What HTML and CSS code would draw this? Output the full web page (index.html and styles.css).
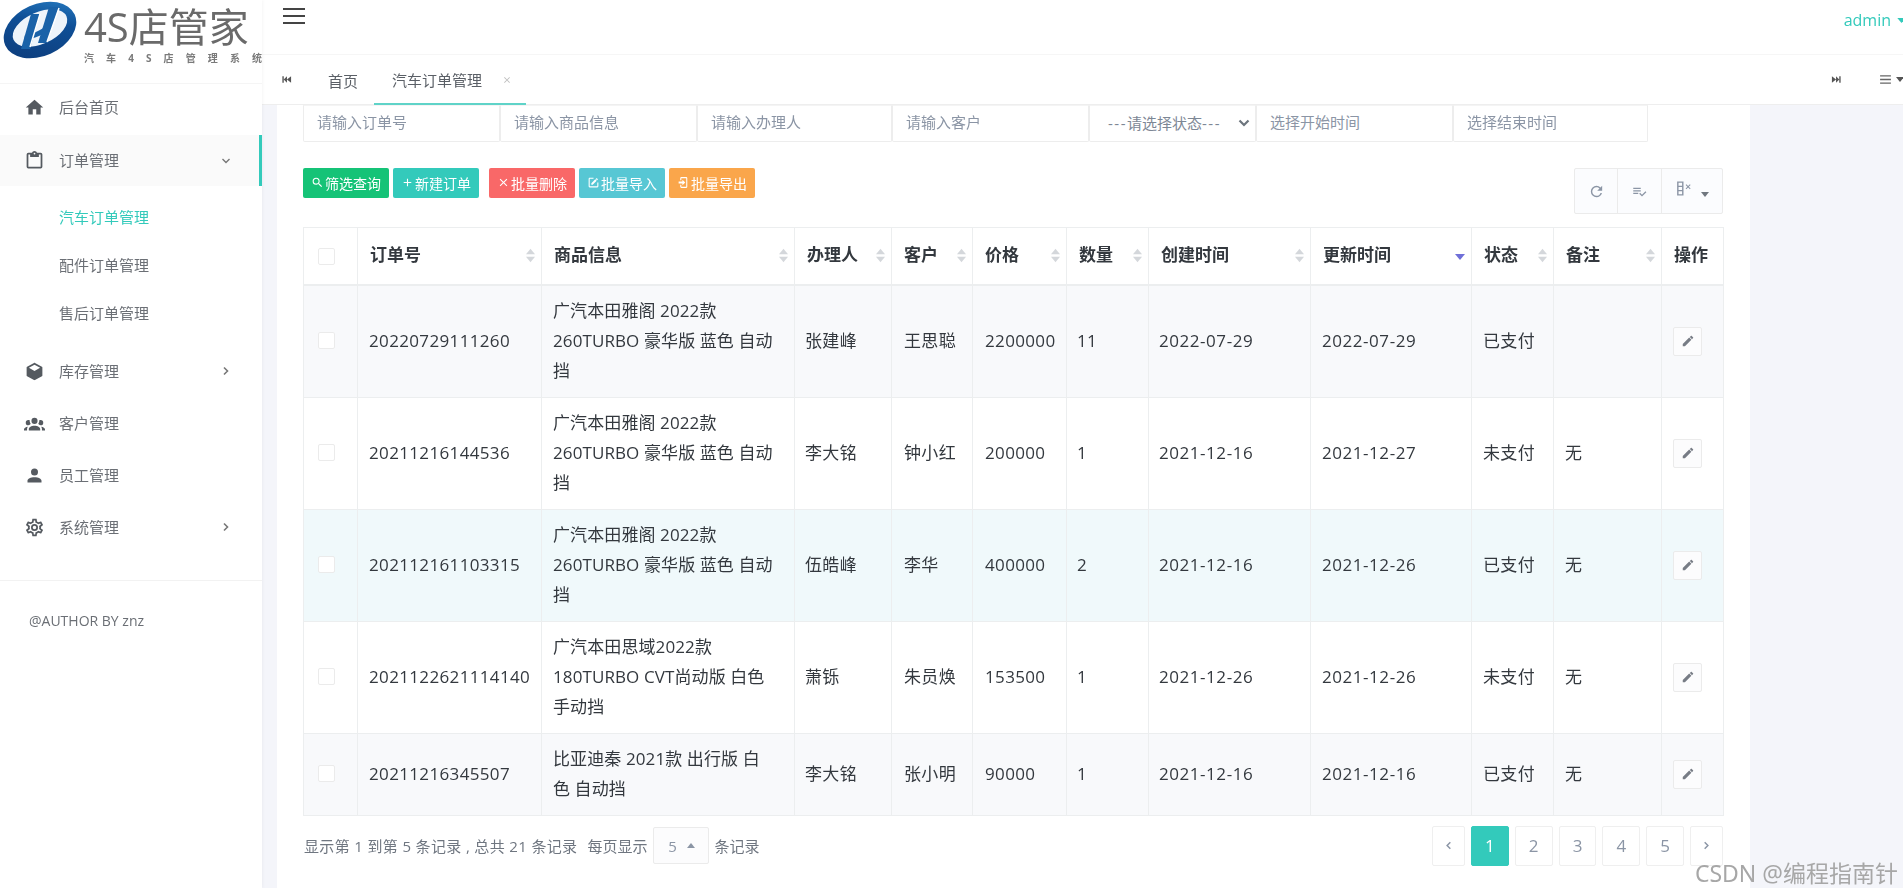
FILE: index.html
```html
<!DOCTYPE html>
<html lang="zh-CN">
<head>
<meta charset="utf-8">
<title>汽车订单管理</title>
<link rel="stylesheet" href="styles.css">
</head>
<body>
<svg class="defs" aria-hidden="true">
  <symbol id="i-home" viewBox="0 0 24 24"><path d="M10 20v-6h4v6h5v-8h3L12 3 2 12h3v8z"/></symbol>
  <symbol id="i-clip" viewBox="0 0 24 24"><path d="M19 3h-4.18C14.4 1.84 13.3 1 12 1s-2.4.84-2.82 2H5a2 2 0 0 0-2 2v14a2 2 0 0 0 2 2h14a2 2 0 0 0 2-2V5a2 2 0 0 0-2-2zm-7 0a1 1 0 1 1 0 2 1 1 0 0 1 0-2zm7 16H5V5h2v3h10V5h2z"/></symbol>
  <symbol id="i-cube" viewBox="0 0 24 24"><path d="M21 16.5c0 .38-.21.71-.53.88l-7.9 4.44c-.16.12-.36.18-.57.18s-.41-.06-.57-.18l-7.9-4.44A.991.991 0 0 1 3 16.5v-9c0-.38.21-.71.53-.88l7.9-4.44c.16-.12.36-.18.57-.18s.41.06.57.18l7.9 4.44c.32.17.53.5.53.88zM12 4.2 5.6 7.8 12 11.4l6.4-3.6z"/></symbol>
  <symbol id="i-group" viewBox="0 0 24 24"><path d="M12 5.5A3.5 3.5 0 0 1 15.5 9 3.5 3.5 0 0 1 12 12.5 3.5 3.5 0 0 1 8.5 9 3.5 3.5 0 0 1 12 5.5M5 8c.56 0 1.08.15 1.53.42-.15 1.43.27 2.85 1.13 3.96C7.16 13.34 6.16 14 5 14a3 3 0 0 1-3-3 3 3 0 0 1 3-3m14 0a3 3 0 0 1 3 3 3 3 0 0 1-3 3c-1.16 0-2.16-.66-2.66-1.62a5.536 5.536 0 0 0 1.13-3.96c.45-.27.97-.42 1.53-.42M5.5 18.25c0-2.07 2.91-3.75 6.5-3.75s6.5 1.68 6.5 3.75V20h-13v-1.75M0 20v-1.5c0-1.39 1.89-2.56 4.45-2.9-.59.68-.95 1.62-.95 2.65V20H0m24 0h-3.5v-1.75c0-1.03-.36-1.97-.95-2.65 2.56.34 4.45 1.51 4.45 2.9V20z"/></symbol>
  <symbol id="i-user" viewBox="0 0 24 24"><path d="M12 4a4 4 0 0 1 4 4 4 4 0 0 1-4 4 4 4 0 0 1-4-4 4 4 0 0 1 4-4m0 10c4.42 0 8 1.79 8 4v2H4v-2c0-2.21 3.58-4 8-4z"/></symbol>
  <symbol id="i-cog" viewBox="0 0 24 24"><path d="M12 8a4 4 0 0 1 4 4 4 4 0 0 1-4 4 4 4 0 0 1-4-4 4 4 0 0 1 4-4m0 2a2 2 0 0 0-2 2 2 2 0 0 0 2 2 2 2 0 0 0 2-2 2 2 0 0 0-2-2m-2 12c-.25 0-.46-.18-.5-.42l-.37-2.65c-.63-.25-1.17-.59-1.69-.99l-2.49 1.01c-.22.08-.49 0-.61-.22l-2-3.46a.493.493 0 0 1 .12-.64l2.11-1.66L4.5 12l.07-1-2.11-1.63a.493.493 0 0 1-.12-.64l2-3.46c.12-.22.39-.31.61-.22l2.49 1c.52-.39 1.06-.73 1.69-.98l.37-2.65c.04-.24.25-.42.5-.42h4c.25 0 .46.18.5.42l.37 2.65c.63.25 1.17.59 1.69.98l2.49-1c.22-.09.49 0 .61.22l2 3.46c.13.22.07.49-.12.64L19.43 11l.07 1-.07 1 2.11 1.63c.19.15.25.42.12.64l-2 3.46c-.12.22-.39.31-.61.22l-2.49-1c-.52.39-1.06.73-1.69.98l-.37 2.65c-.04.24-.25.42-.5.42h-4m1.25-18-.37 2.61c-1.2.25-2.26.89-3.03 1.78L5.44 7.35l-.75 1.3L6.8 10.2a5.55 5.55 0 0 0 0 3.6l-2.12 1.56.75 1.3 2.43-1.04c.77.88 1.82 1.52 3.01 1.76l.37 2.62h1.52l.37-2.61c1.19-.25 2.24-.89 3.01-1.77l2.43 1.04.75-1.3-2.12-1.55c.4-1.17.4-2.44 0-3.61l2.11-1.55-.75-1.3-2.41 1.04a5.42 5.42 0 0 0-3.03-1.77L12.75 4h-1.5z"/></symbol>
  <symbol id="i-pencil" viewBox="0 0 24 24"><path d="M20.71 7.04c.39-.39.39-1.04 0-1.41l-2.34-2.34c-.37-.39-1.02-.39-1.41 0l-1.84 1.83 3.75 3.75M3 17.25V21h3.75L17.81 9.93l-3.75-3.75L3 17.25z"/></symbol>
  <symbol id="i-search" viewBox="0 0 24 24"><path d="M9.5 3A6.5 6.5 0 0 1 16 9.5c0 1.61-.59 3.09-1.56 4.23l.27.27h.79l5 5-1.5 1.5-5-5v-.79l-.27-.27A6.516 6.516 0 0 1 9.5 16 6.5 6.5 0 0 1 3 9.5 6.5 6.5 0 0 1 9.5 3m0 2C7 5 5 7 5 9.5S7 14 9.5 14 14 12 14 9.5 12 5 9.5 5z"/></symbol>
  <symbol id="i-plus" viewBox="0 0 24 24"><path d="M19 13h-6v6h-2v-6H5v-2h6V5h2v6h6v2z"/></symbol>
  <symbol id="i-close" viewBox="0 0 24 24"><path d="M19 6.41 17.59 5 12 10.59 6.41 5 5 6.41 10.59 12 5 17.59 6.41 19 12 13.41 17.59 19 19 17.59 13.41 12 19 6.41z"/></symbol>
  <symbol id="i-edit" viewBox="0 0 24 24"><path d="M5 3c-1.11 0-2 .89-2 2v14a2 2 0 0 0 2 2h14a2 2 0 0 0 2-2v-7h-2v7H5V5h7V3H5m12.78 1a.69.69 0 0 0-.48.2l-1.22 1.21 2.5 2.5L19.8 6.7c.26-.26.26-.7 0-.95L18.25 4.2c-.13-.13-.3-.2-.47-.2m-2.41 2.12L8 13.5V16h2.5l7.37-7.38-2.5-2.5z"/></symbol>
  <symbol id="i-export" viewBox="0 0 24 24"><path d="M10 17.25V14H3v-4h7V6.75L15.25 12 10 17.25M8 2h9a2 2 0 0 1 2 2v16a2 2 0 0 1-2 2H8a2 2 0 0 1-2-2v-4h2v4h9V4H8v4H6V4a2 2 0 0 1 2-2z"/></symbol>
  <symbol id="i-refresh" viewBox="0 0 24 24"><path d="M17.65 6.35A7.958 7.958 0 0 0 12 4a8 8 0 0 0-8 8 8 8 0 0 0 8 8c3.73 0 6.84-2.55 7.73-6h-2.08A5.99 5.99 0 0 1 12 18a6 6 0 0 1-6-6 6 6 0 0 1 6-6c1.66 0 3.14.69 4.22 1.78L13 11h7V4l-2.35 2.35z"/></symbol>
  <symbol id="i-list" viewBox="0 0 24 24"><path d="M14 10H2v2h12v-2m0-4H2v2h12V6M2 16h8v-2H2v2m19.5-4.5L23 13l-6.99 7-4.51-4.5L13 14l3.01 3 5.49-5.5z"/></symbol>
  <symbol id="i-cols" viewBox="0 0 24 24"><path d="M3 2h9v20H3zm2 2v4h5V4zm0 6v4h5v-4zm0 6v4h5v-4zM15 7l1-1 2.500 2.500L21 6l1 1-2.500 2.500L22 12l-1 1-2.500-2.500L16 13l-1-1 2.500-2.500z"/></symbol>
  <symbol id="i-first" viewBox="0 0 24 24"><path d="M3 5h3v14H3zM13 5v14L6 12zM22 5v14l-9-7z"/></symbol>
  <symbol id="i-last" viewBox="0 0 24 24"><path d="M21 5h-3v14h3zM11 5v14l7-7zM2 5v14l9-7z"/></symbol>
  <symbol id="i-menu" viewBox="0 0 24 24"><path d="M2 4h20v2.600H2zM2 10.700h20v2.600H2zM2 17.400h20V20H2z"/></symbol>
  <symbol id="i-down" viewBox="0 0 12 12"><path d="M2.500 4 6 7.500 9.500 4" fill="none" stroke="currentColor" stroke-width="1.400"/></symbol>
  <symbol id="i-chev" viewBox="0 0 12 12"><path d="M1.500 3.500 6 8 10.500 3.500" fill="none" stroke="currentColor" stroke-width="2.200"/></symbol>
  <symbol id="i-right" viewBox="0 0 12 12"><path d="M4 2.500 7.500 6 4 9.500" fill="none" stroke="currentColor" stroke-width="1.600"/></symbol>
  <symbol id="i-left" viewBox="0 0 12 12"><path d="M8 2.500 4.500 6 8 9.500" fill="none" stroke="currentColor" stroke-width="1.600"/></symbol>
  <symbol id="i-caret" viewBox="0 0 10 6"><path d="M0 0h10L5 6z"/></symbol>
  <symbol id="i-up" viewBox="0 0 10 6"><path d="M0 6h10L5 0z"/></symbol>
</svg>

<div class="app">
  <aside class="sidebar">
    <div class="brand">
      <svg class="brand-mark" viewBox="0 0 78 62" aria-hidden="true">
        <defs>
          <linearGradient id="orb" x1="0" y1="1" x2="1" y2="0">
            <stop offset="0" stop-color="#0d3a78"/>
            <stop offset=".6" stop-color="#0f4f96"/>
            <stop offset="1" stop-color="#2a83c9"/>
          </linearGradient>
        </defs>
        <ellipse cx="37" cy="30" rx="38" ry="26" transform="rotate(-24 37 30)" fill="url(#orb)"/>
        <ellipse cx="37" cy="28" rx="29" ry="16" transform="rotate(-24 37 28)" fill="#eef4fa"/>
        <path d="M28 14h9L27 49h-9z" fill="#1a62a8"/>
        <path d="M46 7h10L44 43h-9z" fill="#1a62a8"/>
        <path d="M22 35C31 34 41 29 50 20v6C42 34 32 39 21 40z" fill="#1a62a8"/>
        <path d="M37 14 27 47M56 8 44 42" fill="none" stroke="#fff" stroke-width="1.500"/>
      </svg>
      <div class="brand-copy">
        <div class="brand-title">4S店管家</div>
        <div class="brand-sub"><span>汽</span><span>车</span><span>4</span><span>S</span><span>店</span><span>管</span><span>理</span><span>系</span><span>统</span></div>
      </div>
    </div>
    <nav class="nav">
      <a class="nav-item nav-first"><svg class="nav-icon"><use href="#i-home"/></svg><span>后台首页</span></a>
      <a class="nav-item nav-open"><svg class="nav-icon"><use href="#i-clip"/></svg><span>订单管理</span><svg class="nav-arrow"><use href="#i-down"/></svg></a>
      <div class="subnav">
        <a class="sub-item sub-active">汽车订单管理</a>
        <a class="sub-item">配件订单管理</a>
        <a class="sub-item">售后订单管理</a>
      </div>
      <a class="nav-item"><svg class="nav-icon"><use href="#i-cube"/></svg><span>库存管理</span><svg class="nav-arrow"><use href="#i-right"/></svg></a>
      <a class="nav-item"><svg class="nav-icon"><use href="#i-group"/></svg><span>客户管理</span></a>
      <a class="nav-item"><svg class="nav-icon"><use href="#i-user"/></svg><span>员工管理</span></a>
      <a class="nav-item"><svg class="nav-icon"><use href="#i-cog"/></svg><span>系统管理</span><svg class="nav-arrow"><use href="#i-right"/></svg></a>
    </nav>
    <div class="author">@AUTHOR BY znz</div>
  </aside>

  <div class="main">
    <header class="topbar">
      <div class="burger"><i></i><i></i><i></i></div>
      <div class="user">admin<svg class="user-caret"><use href="#i-caret"/></svg></div>
    </header>
    <div class="tabs">
      <svg class="tab-nav"><use href="#i-first"/></svg>
      <a class="tab">首页</a>
      <a class="tab tab-active">汽车订单管理<svg class="tab-close"><use href="#i-close"/></svg></a>
      <svg class="tab-nav tab-next"><use href="#i-last"/></svg>
      <svg class="tab-menu"><use href="#i-menu"/></svg>
      <svg class="tab-caret"><use href="#i-caret"/></svg>
    </div>
    <div class="body">
      <section class="card">
        <form class="filters">
          <input class="field" placeholder="请输入订单号">
          <input class="field" placeholder="请输入商品信息">
          <input class="field" placeholder="请输入办理人">
          <input class="field" placeholder="请输入客户">
          <div class="field field-select"><span><span class="dash">---</span>请选择状态<span class="dash">---</span></span><svg class="select-arrow"><use href="#i-chev"/></svg></div>
          <input class="field" placeholder="选择开始时间">
          <input class="field" placeholder="选择结束时间">
        </form>

        <div class="actions">
          <div class="btns">
            <a class="btn btn-green"><svg><use href="#i-search"/></svg>筛选查询</a>
            <a class="btn btn-teal"><svg><use href="#i-plus"/></svg>新建订单</a>
            <a class="btn btn-red"><svg><use href="#i-close"/></svg>批量删除</a>
            <a class="btn btn-cyan"><svg><use href="#i-edit"/></svg>批量导入</a>
            <a class="btn btn-orange"><svg><use href="#i-export"/></svg>批量导出</a>
          </div>
          <div class="tools">
            <a class="tool tool-a"><svg><use href="#i-refresh"/></svg></a>
            <a class="tool tool-b"><svg><use href="#i-list"/></svg></a>
            <a class="tool tool-c"><svg><use href="#i-cols"/></svg><svg class="tool-caret"><use href="#i-caret"/></svg></a>
          </div>
        </div>

        <table class="grid">
          <colgroup>
            <col class="c-check"><col class="c-no"><col class="c-goods"><col class="c-staff"><col class="c-cust"><col class="c-price"><col class="c-qty"><col class="c-date"><col class="c-date2"><col class="c-state"><col class="c-note"><col class="c-op">
          </colgroup>
          <thead>
            <tr>
              <th class="cell-check"><span class="check"></span></th>
              <th><div class="th-in">订单号<span class="sort"><svg><use href="#i-up"/></svg><svg><use href="#i-caret"/></svg></span></div></th>
              <th><div class="th-in">商品信息<span class="sort"><svg><use href="#i-up"/></svg><svg><use href="#i-caret"/></svg></span></div></th>
              <th><div class="th-in">办理人<span class="sort"><svg><use href="#i-up"/></svg><svg><use href="#i-caret"/></svg></span></div></th>
              <th><div class="th-in">客户<span class="sort"><svg><use href="#i-up"/></svg><svg><use href="#i-caret"/></svg></span></div></th>
              <th><div class="th-in">价格<span class="sort"><svg><use href="#i-up"/></svg><svg><use href="#i-caret"/></svg></span></div></th>
              <th><div class="th-in">数量<span class="sort"><svg><use href="#i-up"/></svg><svg><use href="#i-caret"/></svg></span></div></th>
              <th><div class="th-in">创建时间<span class="sort"><svg><use href="#i-up"/></svg><svg><use href="#i-caret"/></svg></span></div></th>
              <th><div class="th-in">更新时间<span class="sort sort-desc"><svg><use href="#i-caret"/></svg></span></div></th>
              <th><div class="th-in">状态<span class="sort"><svg><use href="#i-up"/></svg><svg><use href="#i-caret"/></svg></span></div></th>
              <th><div class="th-in">备注<span class="sort"><svg><use href="#i-up"/></svg><svg><use href="#i-caret"/></svg></span></div></th>
              <th><div class="th-in">操作</div></th>
            </tr>
          </thead>
          <tbody>
            <tr class="row-odd">
              <td class="cell-check"><span class="check"></span></td>
              <td>20220729111260</td>
              <td>广汽本田雅阁 2022款 260TURBO 豪华版 蓝色 自动挡</td>
              <td>张建峰</td><td>王思聪</td><td>2200000</td><td>11</td>
              <td>2022-07-29</td><td>2022-07-29</td><td>已支付</td><td></td>
              <td><a class="op"><svg><use href="#i-pencil"/></svg></a></td>
            </tr>
            <tr>
              <td class="cell-check"><span class="check"></span></td>
              <td>20211216144536</td>
              <td>广汽本田雅阁 2022款 260TURBO 豪华版 蓝色 自动挡</td>
              <td>李大铭</td><td>钟小红</td><td>200000</td><td>1</td>
              <td>2021-12-16</td><td>2021-12-27</td><td>未支付</td><td>无</td>
              <td><a class="op"><svg><use href="#i-pencil"/></svg></a></td>
            </tr>
            <tr class="row-hover">
              <td class="cell-check"><span class="check"></span></td>
              <td>202112161103315</td>
              <td>广汽本田雅阁 2022款 260TURBO 豪华版 蓝色 自动挡</td>
              <td>伍皓峰</td><td>李华</td><td>400000</td><td>2</td>
              <td>2021-12-16</td><td>2021-12-26</td><td>已支付</td><td>无</td>
              <td><a class="op"><svg><use href="#i-pencil"/></svg></a></td>
            </tr>
            <tr>
              <td class="cell-check"><span class="check"></span></td>
              <td>2021122621114140</td>
              <td>广汽本田思域2022款 180TURBO CVT尚动版 白色 手动挡</td>
              <td>萧铄</td><td>朱员焕</td><td>153500</td><td>1</td>
              <td>2021-12-26</td><td>2021-12-26</td><td>未支付</td><td>无</td>
              <td><a class="op"><svg><use href="#i-pencil"/></svg></a></td>
            </tr>
            <tr class="row-odd">
              <td class="cell-check"><span class="check"></span></td>
              <td>20211216345507</td>
              <td>比亚迪秦 2021款 出行版 白色 自动挡</td>
              <td>李大铭</td><td>张小明</td><td>90000</td><td>1</td>
              <td>2021-12-16</td><td>2021-12-16</td><td>已支付</td><td>无</td>
              <td><a class="op"><svg><use href="#i-pencil"/></svg></a></td>
            </tr>
          </tbody>
        </table>

        <div class="pager-row">
          <div class="pager-info">
            <span class="pager-text">显示第 1 到第 5 条记录 , 总共 21 条记录</span>
            <span class="pager-size">每页显示</span>
            <span class="size-box">5<svg><use href="#i-up"/></svg></span>
            <span>条记录</span>
          </div>
          <div class="pager">
            <a class="page page-nav"><svg><use href="#i-left"/></svg></a>
            <a class="page page-on">1</a>
            <a class="page">2</a>
            <a class="page">3</a>
            <a class="page">4</a>
            <a class="page">5</a>
            <a class="page page-nav"><svg><use href="#i-right"/></svg></a>
          </div>
        </div>
      </section>
    </div>
  </div>
  <div class="watermark">CSDN @编程指南针</div>
</div>
</body>
</html>
```

FILE: styles.css
```css
* { box-sizing: border-box; }
html, body { margin: 0; height: 100%; overflow: hidden; background: #fff; }
body { font-family: "Open Sans", "Noto Sans CJK SC", sans-serif; font-size: 15px; color: #4d5259; }
a { color: inherit; text-decoration: none; }
svg { fill: currentColor; display: block; }
.defs { position: absolute; width: 0; height: 0; }

.app { position: relative; display: flex; width: 1903px; height: 888px; overflow: hidden; filter: blur(0.55px); }

/* sidebar */
.sidebar { flex: 0 0 262px; width: 262px; background: #fff; color: #6b6f75; box-shadow: 1px 0 3px rgba(0,0,0,.04); z-index: 1; }
.brand { display: flex; height: 84px; border-bottom: 1px solid #f5f5f5; padding-left: 3px; overflow: hidden; }
.brand-mark { flex: 0 0 78px; width: 78px; height: 62px; }
.brand-copy { margin-left: 3px; white-space: nowrap; }
.brand-title { font-size: 40px; line-height: 40px; margin-top: 7px; color: #6a6a6a; font-weight: 400; }
.brand-sub { display: flex; justify-content: space-between; width: 178px; font-size: 10px; line-height: 12px; margin-top: 5px; color: #7a7a7a; font-weight: 700; }

.nav { padding-bottom: 27px; border-bottom: 1px solid #f2f2f2; }
.nav-item { display: flex; align-items: center; height: 52px; padding-left: 24px; }
.nav-item span { margin-top: -2px; }
.nav-first { height: 46px; margin-bottom: 5px; }
.nav-open { height: 51px; background: #fafafa; border-right: 3px solid #33cabb; }
.nav-icon { flex: 0 0 21px; width: 21px; height: 21px; margin-right: 14px; color: #555a60; }
.nav-arrow { width: 12px; height: 12px; margin-left: auto; margin-right: 30px; color: #777; }
.nav-open .nav-arrow { margin-right: 27px; }
.subnav { padding: 7px 0 8px; }
.sub-item { display: block; height: 48px; line-height: 48px; padding-left: 59px; }
.sub-active { color: #33cabb; }
.author { padding: 29px 0 0 29px; line-height: 22px; font-size: 14px; color: #6b6f75; }

/* main */
.main { flex: 1; display: flex; flex-direction: column; min-width: 0; }
.topbar { display: flex; justify-content: space-between; align-items: flex-start; height: 55px; flex: 0 0 55px; padding: 8px 0 0 21px; border-bottom: 1px solid #f6f6f6; }
.burger { display: flex; flex-direction: column; gap: 5px; width: 22px; }
.burger i { display: block; height: 2px; background: #444; }
.user { display: flex; align-items: center; color: #33cabb; font-size: 16px; line-height: 22px; margin-top: 1px; margin-right: -3px; }
.user-caret { width: 9px; height: 5px; margin-left: 6px; }

.tabs { display: flex; align-items: center; height: 50px; flex: 0 0 50px; padding-left: 19px; border-bottom: 1px solid #eeeeee; color: #5a5f66; }
.tab-nav { flex: 0 0 11px; width: 11px; height: 11px; color: #555; }
.tab { display: flex; align-items: center; height: 100%; margin-left: 36px; padding-top: 2px; }
.tab-active { margin-left: 16px; padding: 2px 14px 0 18px; border-bottom: 2px solid #5fd3c8; height: 50px; }
.tab-close { width: 10px; height: 10px; margin-left: 20px; color: #bdbdbd; }
.tab-next { margin-left: auto; }
.tab-menu { width: 13px; height: 13px; margin-left: 37px; color: #666; }
.tab-caret { width: 8px; height: 5px; margin-left: 4px; margin-right: -1px; color: #555; }

.body { flex: 1; background: #f4f5fa; min-height: 0; overflow: hidden; padding-left: 15px; }
.card { width: 1473px; height: 100%; background: #fff; padding: 0 27px 0 26px; }

.filters { display: grid; grid-template-columns: 197px 197px 195px 197px 167px 197px 195px; height: 37px; width: 1345px; }
.field { display: flex; align-items: center; height: 37px; border: 1px solid #ededed; border-top-color: #f4f4f4; border-radius: 0 0 2px 2px; padding: 0 14px 3px 13px; font: inherit; color: #8b95a5; background: #fff; outline: none; min-width: 0; }
.field::placeholder { color: #8b95a5; opacity: 1; }
.field-select { padding: 0 5px 3px 18px; justify-content: space-between; white-space: nowrap; color: #7d8795; }
.dash { letter-spacing: 1.500px; }
.select-arrow { width: 12px; height: 12px; color: #6c757d; margin-top: 2px; }

.actions { display: flex; justify-content: space-between; align-items: flex-start; margin-top: 26px; margin-bottom: 13px; }
.btns { display: flex; }
.btn { display: flex; align-items: center; justify-content: center; gap: 1px; width: 86px; height: 30px; margin-right: 4px; border-radius: 2px; color: #fff; font-size: 14px; white-space: nowrap; }
.btn svg { width: 13px; height: 13px; transform: translateY(-1px); }
.btn-green { background: #15c377; }
.btn-teal { background: #33cabb; margin-right: 10px; }
.btn-red { background: #f96868; }
.btn-cyan { background: #57c7d4; }
.btn-orange { background: #faa64b; margin-right: 0; }

.tools { display: flex; height: 46px; border: 1px solid #ebebeb; border-radius: 2px; background: #fbfcfe; color: #8b95a5; }
.tool { display: flex; align-items: center; justify-content: center; border-right: 1px solid #ebebeb; }
.tool:last-child { border-right: 0; }
.tool-a { width: 43px; }
.tool-b { width: 44px; }
.tool-c { width: 60px; gap: 9px; }
.tool-a svg { width: 17px; height: 17px; }
.tool-b svg { width: 15px; height: 15px; }
.tool-c svg { width: 17px; height: 17px; transform: translateY(-3px); }
.tool-c .tool-caret { width: 8px; height: 5px; transform: translateY(3px); color: #70777f; }

.grid { width: 1420px; table-layout: fixed; border-collapse: collapse; color: #33383e; font-size: 17px; }
.c-check { width: 54px; } .c-no { width: 184px; } .c-goods { width: 253px; } .c-staff { width: 97px; }
.c-cust { width: 81px; } .c-price { width: 94px; } .c-qty { width: 82px; } .c-date { width: 162px; }
.c-date2 { width: 161px; } .c-state { width: 82px; } .c-note { width: 108px; } .c-op { width: 62px; }
.grid th { height: 57px; padding: 0 6px 5px 12px; border: 1px solid #eceeef; border-bottom-width: 2px; text-align: left; font-weight: 700; color: #33383e; }
.grid td { padding: 10px 8px 11px 11px; line-height: 30px; border: 1px solid #eceeef; vertical-align: middle; letter-spacing: .35px; white-space: nowrap; }
.grid td:nth-child(3) { white-space: normal; padding-right: 20px; letter-spacing: .1px; }
.grid td:nth-child(4), .grid td:nth-child(7), .grid td:nth-child(8) { padding-left: 10px; }
.grid td:nth-child(5), .grid td:nth-child(6) { padding-left: 12px; }
.grid td:nth-child(8), .grid td:nth-child(9) { letter-spacing: .55px; }
.grid .cell-check { padding: 0 0 3px 14px; text-align: left; }
.th-in { display: flex; justify-content: space-between; align-items: center; white-space: nowrap; }
.check { display: inline-block; width: 17px; height: 17px; background: #fff; border: 1px solid #ebebeb; border-radius: 2px; vertical-align: middle; }
.row-odd td { background: #f8f9fb; }
.row-hover td { background: #f0f9fb; }
.sort { display: flex; flex-direction: column; gap: 1px; color: #d4d7db; margin-top: 4px; }
.sort svg { width: 9px; height: 7px; }
.sort-desc { color: #6f6fd8; margin-top: 7px; gap: 0; }
.sort-desc svg { width: 10px; height: 8px; }
.op { display: flex; align-items: center; justify-content: center; width: 29px; height: 29px; background: #fcfcfd; border: 1px solid #ebebeb; border-radius: 2px; color: #777c85; }
.op svg { width: 14px; height: 14px; }
.grid td:last-child { padding: 10px 0 10px 11px; }

.pager-row { display: flex; justify-content: space-between; align-items: center; margin-top: 10px; color: #6f7680; font-size: 15px; }
.pager-info { display: flex; align-items: center; white-space: nowrap; padding-left: 1px; }
.pager-text { letter-spacing: .35px; }
.pager-size { margin-left: 10px; }
.size-box { display: flex; align-items: center; justify-content: center; gap: 10px; width: 56px; height: 37px; margin: 0 5px 0 6px; border: 1px solid #ebebeb; border-radius: 2px; background: #fcfcfd; color: #8b95a5; }
.size-box svg { width: 8px; height: 5px; }
.pager { display: flex; gap: 6px; }
.page { display: flex; align-items: center; justify-content: center; width: 37.8px; height: 40px; border: 1px solid #efefef; border-radius: 2px; color: #8b95a5; font-size: 17px; }
.page svg { width: 11px; height: 11px; }
.page-nav { width: 33px; }
.page-on { background: #33cabb; border-color: #33cabb; color: #fff; }

.watermark { position: absolute; right: 5px; bottom: 2px; font-family: "Noto Sans", "Noto Sans CJK SC", sans-serif; font-size: 23px; line-height: 26px; color: #a7a7a7; white-space: nowrap; z-index: 2; }
```
